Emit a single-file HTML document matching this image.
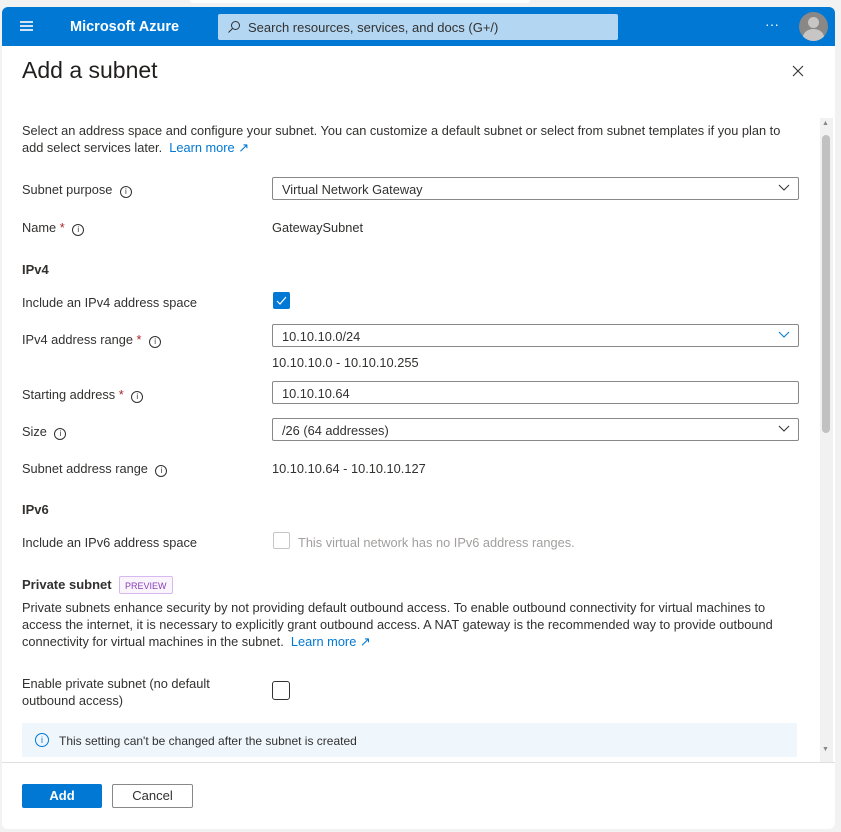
<!DOCTYPE html>
<html><head><style>
*{box-sizing:border-box;margin:0;padding:0}
body{width:841px;height:832px;background:#f2f2f2;font-family:"Liberation Sans",sans-serif;font-size:12.8px;color:#323130;position:relative;overflow:hidden}
.a{position:absolute;white-space:nowrap}
.panel{position:absolute;left:2px;top:7px;width:833px;height:822px;background:#fff;border-radius:6px;overflow:hidden}
.hdr{position:absolute;left:0;top:0;width:833px;height:39px;background:#0078d4}
.lbl{position:absolute;left:22px}
.box{position:absolute;left:272px;width:527px;height:23px;border:1px solid #8a8886;border-radius:2px;padding:4px 9px}
.chev{position:absolute;right:8px;top:6px}
.i{display:inline-block;width:12px;height:12px;border:1px solid #323130;border-radius:50%;font-size:8px;text-align:center;line-height:10px;vertical-align:0;margin-left:4px}
.req{color:#a4262c}
h3{font-size:13px;font-weight:bold;position:absolute;left:22px}
.lnk{color:#0078d4}
</style></head><body>
<div class="a" style="left:190px;top:0;width:340px;height:3px;background:#fff;border-radius:0 0 4px 4px"></div>
<div class="panel">
 <div class="hdr">
  <div class="a" style="left:18px;top:14px;width:13px;height:2px;background:#cfe4f7;box-shadow:0 4px 0 #cfe4f7,0 8px 0 #cfe4f7"></div>
  <div class="a" style="left:68px;top:12px;color:#fff;font-weight:bold;font-size:14.5px">Microsoft Azure</div>
  <div class="a" style="left:216px;top:7px;width:400px;height:26px;background:#b3d6f2;border-radius:2px"></div>
  <svg class="a" style="left:225px;top:13px" width="14" height="14" viewBox="0 0 14 14"><circle cx="8.5" cy="5.5" r="4" fill="none" stroke="#323130" stroke-width="1"/><path d="M5.5 8.5L1.5 12.5" stroke="#323130"/></svg>
  <div class="a" style="left:246px;top:13px;font-size:13px;color:#323130">Search resources, services, and docs (G+/)</div>
  <div class="a" style="left:763px;top:9px;color:#fff;font-size:14px">···</div>
  <div class="a" style="left:797px;top:5px;width:29px;height:29px;border-radius:50%;background:#8a8886;overflow:hidden"><div class="a" style="left:9px;top:5px;width:11px;height:11px;border-radius:50%;background:#c8c6c4"></div><div class="a" style="left:4px;top:17px;width:21px;height:16px;border-radius:50%;background:#c8c6c4"></div></div>
 </div>
 <div class="a" style="left:20px;top:50px;font-size:23px;color:#201f1e">Add a subnet</div>
 <svg class="a" style="left:790px;top:58px" width="12" height="12"><path d="M1 1L11 11M11 1L1 11" stroke="#323130" stroke-width="1.1"/></svg>
 <div class="a" style="left:818px;top:111px;width:13px;height:645px;background:#f1f1f1"></div>
 <div class="a" style="left:820px;top:128px;width:8px;height:298px;background:#c1c1c1;border-radius:4px"></div>
 <div class="a" style="left:820px;top:113px;font-size:7px;color:#888">▲</div>
 <div class="a" style="left:820px;top:739px;font-size:7px;color:#888">▼</div>
 <div class="a" style="left:0;top:755px;width:833px;height:1px;background:#e1dfdd"></div>
</div>
<div class="a" style="left:22px;top:122px;line-height:17px">Select an address space and configure your subnet. You can customize a default subnet or select from subnet templates if you plan to<br>add select services later.&nbsp; <span class="lnk">Learn more ↗</span></div>
<div class="lbl a" style="top:182px">Subnet purpose <span class="i">i</span></div>
<div class="box" style="top:177px">Virtual Network Gateway<svg class="chev" width="12" height="8"><path d="M1 1L6 6L11 1" fill="none" stroke="#323130"/></svg></div>
<div class="lbl a" style="top:220px">Name <span class="req">*</span> <span class="i">i</span></div>
<div class="a" style="left:272px;top:220px">GatewaySubnet</div>
<h3 style="top:262px">IPv4</h3>
<div class="lbl a" style="top:295px">Include an IPv4 address space</div>
<div class="a" style="left:273px;top:292px;width:17px;height:17px;background:#0078d4;border-radius:2px"><svg width="17" height="17"><path d="M4 9L7 12L13 5" fill="none" stroke="#fff" stroke-width="1.2"/></svg></div>
<div class="lbl a" style="top:332px">IPv4 address range <span class="req">*</span> <span class="i">i</span></div>
<div class="box" style="top:324px">10.10.10.0/24<svg class="chev" width="12" height="8"><path d="M1 1L6 6L11 1" fill="none" stroke="#0078d4"/></svg></div>
<div class="a" style="left:272px;top:355px">10.10.10.0 - 10.10.10.255</div>
<div class="lbl a" style="top:387px">Starting address <span class="req">*</span> <span class="i">i</span></div>
<div class="box" style="top:381px">10.10.10.64</div>
<div class="lbl a" style="top:424px">Size <span class="i">i</span></div>
<div class="box" style="top:418px">/26 (64 addresses)<svg class="chev" width="12" height="8"><path d="M1 1L6 6L11 1" fill="none" stroke="#323130"/></svg></div>
<div class="lbl a" style="top:461px">Subnet address range <span class="i">i</span></div>
<div class="a" style="left:272px;top:461px">10.10.10.64 - 10.10.10.127</div>
<h3 style="top:502px">IPv6</h3>
<div class="lbl a" style="top:535px">Include an IPv6 address space</div>
<div class="a" style="left:273px;top:532px;width:17px;height:17px;border:1px solid #c8c6c4;border-radius:2px"></div>
<div class="a" style="left:298px;top:535px;color:#a19f9d">This virtual network has no IPv6 address ranges.</div>
<h3 style="top:577px">Private subnet</h3>
<div class="a" style="left:119px;top:576px;height:18px;border:1px solid #d9b8f0;background:#faf5fd;color:#8a3fb5;font-size:9px;padding:4px 5px;border-radius:2px">PREVIEW</div>
<div class="a" style="left:22px;top:599px;line-height:17px">Private subnets enhance security by not providing default outbound access. To enable outbound connectivity for virtual machines to<br>access the internet, it is necessary to explicitly grant outbound access. A NAT gateway is the recommended way to provide outbound<br>connectivity for virtual machines in the subnet.&nbsp; <span class="lnk">Learn more ↗</span></div>
<div class="a" style="left:22px;top:675px;line-height:17px">Enable private subnet (no default<br>outbound access)</div>
<div class="a" style="left:272px;top:681px;width:18px;height:19px;border:1px solid #323130;border-radius:3px"></div>
<div class="a" style="left:22px;top:723px;width:775px;height:34px;background:#eff6fc"></div>
<div class="a" style="left:35px;top:733px;width:14px;height:14px;border:1px solid #0078d4;border-radius:50%;color:#0078d4;font-size:9px;text-align:center;line-height:12px">i</div>
<div class="a" style="left:59px;top:734px;font-size:12px">This setting can't be changed after the subnet is created</div>
<div class="a" style="left:22px;top:784px;width:80px;height:24px;background:#0078d4;border-radius:2px;color:#fff;font-weight:bold;text-align:center;line-height:24px;font-size:13px">Add</div>
<div class="a" style="left:112px;top:784px;width:81px;height:24px;border:1px solid #8a8886;border-radius:2px;text-align:center;line-height:22px;font-size:13px">Cancel</div>
</body></html>
